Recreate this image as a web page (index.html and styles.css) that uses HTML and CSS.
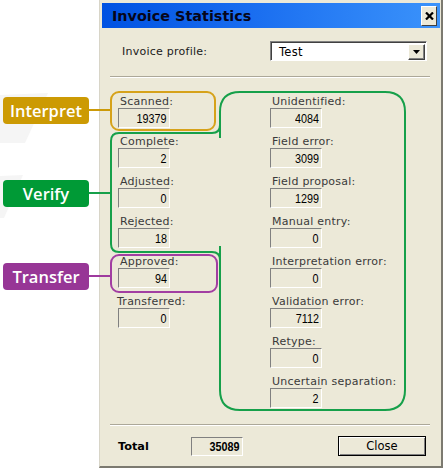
FILE: index.html
```html
<!DOCTYPE html>
<html>
<head>
<meta charset="utf-8">
<link rel="stylesheet" href="styles.css">
</head>
<body>
<div class="page">
  <div class="annotations">
    <svg class="watermark" width="99" height="468" viewBox="0 0 99 468">
      <polygon points="0,95 48,93 25,143 0,143" fill="#f5f5f5"/>
      <polygon points="0,176 23,175 4,218 0,218" fill="#f5f5f5"/>
    </svg>
    <div class="tag tag-interpret">Interpret</div>
    <div class="tag tag-verify">Verify</div>
    <div class="tag tag-transfer">Transfer</div>
  </div>

  <div class="dialog">
    <div class="titlebar">
      <span class="title">Invoice Statistics</span>
      <span class="xbtn"><svg width="9" height="8" viewBox="0 0 9 8"><path d="M1 0.5 L8 7.5 M8 0.5 L1 7.5" stroke="#000" stroke-width="2.2"/></svg></span>
    </div>

    <div class="profile-row">
      <span class="profile-label">Invoice profile:</span>
      <div class="combo">
        <span class="combo-text">Test</span>
        <span class="drop"><svg width="7" height="4" viewBox="0 0 7 4"><path d="M0 0 H7 L3.5 4 Z" fill="#000"/></svg></span>
      </div>
    </div>

    <div class="sep"></div>

    <div class="stats">
      <div class="col">
        <div class="field"><span class="lbl">Scanned:</span><span class="val"><span class="num">19379</span></span></div>
        <div class="field"><span class="lbl">Complete:</span><span class="val"><span class="num">2</span></span></div>
        <div class="field"><span class="lbl">Adjusted:</span><span class="val"><span class="num">0</span></span></div>
        <div class="field"><span class="lbl">Rejected:</span><span class="val"><span class="num">18</span></span></div>
        <div class="field"><span class="lbl">Approved:</span><span class="val"><span class="num">94</span></span></div>
        <div class="field"><span class="lbl lbl-tight">Transferred:</span><span class="val"><span class="num">0</span></span></div>
      </div>
      <div class="col">
        <div class="field"><span class="lbl">Unidentified:</span><span class="val"><span class="num">4084</span></span></div>
        <div class="field"><span class="lbl">Field error:</span><span class="val"><span class="num">3099</span></span></div>
        <div class="field"><span class="lbl">Field proposal:</span><span class="val"><span class="num">1299</span></span></div>
        <div class="field"><span class="lbl">Manual entry:</span><span class="val"><span class="num">0</span></span></div>
        <div class="field"><span class="lbl">Interpretation error:</span><span class="val"><span class="num">0</span></span></div>
        <div class="field"><span class="lbl">Validation error:</span><span class="val"><span class="num">7112</span></span></div>
        <div class="field"><span class="lbl">Retype:</span><span class="val"><span class="num">0</span></span></div>
        <div class="field"><span class="lbl">Uncertain separation:</span><span class="val"><span class="num">2</span></span></div>
      </div>
    </div>

    <div class="sep sep-bottom"></div>

    <div class="footer">
      <span class="total-label">Total</span>
      <span class="val val-total"><span class="num">35089</span></span>
      <span class="close-btn">Close</span>
    </div>
  </div>

  <svg class="overlay" width="443" height="468" viewBox="0 0 443 468">
    <g fill="none" stroke-width="2">
      <line x1="89" y1="110" x2="111" y2="110" stroke="#cc9a08"/>
      <rect x="111" y="92" width="104" height="38" rx="8" stroke="#d6a21a"/>
      <line x1="89" y1="193" x2="111" y2="193" stroke="#16a04a"/>
      <path d="M220,125 Q220,133 212,133 L119,133 Q111,133 111,141 L111,244 Q111,252 119,252 L212,252 Q220,252 220,260" stroke="#16a04a"/>
      <path d="M220,138 L220,112 Q220,92 240,92 L385,92 Q405,92 405,112 L405,390 Q405,410 385,410 L240,410 Q220,410 220,390 L220,246" stroke="#16a04a"/>
      <line x1="89" y1="276" x2="111" y2="276" stroke="#9e3a9e"/>
      <rect x="111" y="255" width="106" height="37" rx="8" stroke="#a23ea2"/>
    </g>
  </svg>
</div>
</body>
</html>
```

FILE: styles.css
```css
html, body {
  margin: 0;
  padding: 0;
  background: #ffffff;
}

body {
  width: 443px;
  height: 468px;
  overflow: hidden;
  font-family: "DejaVu Sans", "Liberation Sans", sans-serif;
  font-size: 11px;
  letter-spacing: 0.25px;
  color: #000;
}

.page {
  position: relative;
  display: flex;
  width: 443px;
  height: 468px;
}

/* ---------- left annotation column ---------- */
.annotations {
  position: relative;
  width: 99px;
  flex: none;
  display: flex;
  flex-direction: column;
  align-items: flex-start;
  padding-left: 3px;
  box-sizing: border-box;
}

.watermark {
  position: absolute;
  top: 0;
  left: 0;
}

.tag {
  position: relative;
  width: 86px;
  height: 27px;
  box-sizing: border-box;
  border-radius: 4px;
  color: #fff;
  font-family: "Open Sans", "DejaVu Sans", sans-serif;
  font-weight: 600;
  font-size: 16.5px;
  letter-spacing: 0;
  display: flex;
  align-items: center;
  justify-content: center;
  padding-bottom: 1px;
}

.tag-interpret {
  margin-top: 97px;
  background: #cc9a03;
}

.tag-verify {
  margin-top: 56px;
  background: #009a36;
}

.tag-transfer {
  margin-top: 56px;
  background: #973696;
}

/* ---------- dialog ---------- */
.dialog {
  width: 344px;
  height: 468px;
  flex: none;
  box-sizing: border-box;
  background: #ece9d8;
  border-left: 1px solid #d8d5c8;
  border-right: 2px solid #7c7a70;
  border-bottom: 2px solid #7c7a70;
  padding: 3px 1px 0 2px;
  display: flex;
  flex-direction: column;
}

.titlebar {
  height: 25px;
  flex: none;
  background: linear-gradient(to right, #0052e2 0%, #1a6ef0 45%, #3b93fb 100%);
  display: flex;
  align-items: center;
  justify-content: space-between;
  padding: 0 3px 0 10px;
}

.title {
  font-family: "DejaVu Sans", sans-serif;
  font-weight: bold;
  font-size: 14.4px;
  letter-spacing: 0;
  color: #06061a;
}

.xbtn {
  width: 16px;
  height: 20px;
  box-sizing: border-box;
  background: #ece9d8;
  border: 1px solid;
  border-color: #ffffff #404040 #404040 #ffffff;
  display: flex;
  align-items: center;
  justify-content: center;
}

.profile-row {
  display: grid;
  grid-template-columns: 152px 157px;
  align-items: center;
  margin: 13px 0 0 16px;
  height: 20px;
}

.profile-label {
  padding-left: 4px;
  color: #1a1a1a;
}

.combo {
  height: 20px;
  box-sizing: border-box;
  background: #fff;
  border: 1px solid;
  border-color: #808080 #ffffff #ffffff #808080;
  box-shadow: inset 1px 1px 0 #404040;
  display: flex;
  align-items: center;
  justify-content: space-between;
  padding: 1px 1px 0 8px;
}

.combo-text {
  font-size: 11.5px;
}

.drop {
  width: 17px;
  height: 16px;
  box-sizing: border-box;
  background: #ece9d8;
  border: 1px solid;
  border-color: #ffffff #404040 #404040 #ffffff;
  box-shadow: inset -1px -1px 0 #808080;
  display: flex;
  align-items: center;
  justify-content: center;
}

.sep {
  height: 0;
  margin: 15px 10px 0 8px;
  border-top: 1px solid #aca899;
  border-bottom: 1px solid #ffffff;
}

.sep-bottom {
  margin-top: 10px;
}

.stats {
  display: grid;
  grid-template-columns: 152px 140px;
  margin: 16px 0 0 16px;
}

.col {
  display: flex;
  flex-direction: column;
}

.field {
  height: 40px;
  display: flex;
  flex-direction: column;
}

.lbl {
  display: block;
  height: 14px;
  box-sizing: border-box;
  padding: 1px 0 0 2px;
  line-height: normal;
  white-space: nowrap;
  color: #3a3a3a;
}

.lbl-tight {
  padding-left: 0;
  margin-left: -1px;
}

.val {
  width: 52px;
  height: 20px;
  box-sizing: border-box;
  border: 1px solid;
  border-color: #808080 #ffffff #ffffff #808080;
  text-align: right;
  padding-right: 2px;
  font-family: "Liberation Sans", sans-serif;
  font-size: 13.5px;
  letter-spacing: 0;
  line-height: 19px;
}

.num {
  display: inline-block;
  transform: scaleX(0.8);
  transform-origin: right center;
}

.footer {
  display: flex;
  align-items: center;
  margin: 10px 14px 0 16px;
  height: 20px;
}

.total-label {
  width: 73px;
  font-weight: bold;
  font-size: 11.3px;
  letter-spacing: 0;
}

.val-total {
  height: 19px;
  line-height: 18px;
  font-weight: bold;
}

.close-btn {
  margin-left: auto;
  width: 88px;
  height: 20px;
  box-sizing: border-box;
  border: 1px solid #000;
  box-shadow: inset 1px 1px 0 #ffffff, inset -1px -1px 0 #808080;
  background: #ece9d8;
  display: flex;
  align-items: center;
  justify-content: center;
  font-size: 11.5px;
  letter-spacing: 0;
}

/* ---------- outline overlay ---------- */
.overlay {
  position: absolute;
  top: 0;
  left: 0;
  pointer-events: none;
}
```
